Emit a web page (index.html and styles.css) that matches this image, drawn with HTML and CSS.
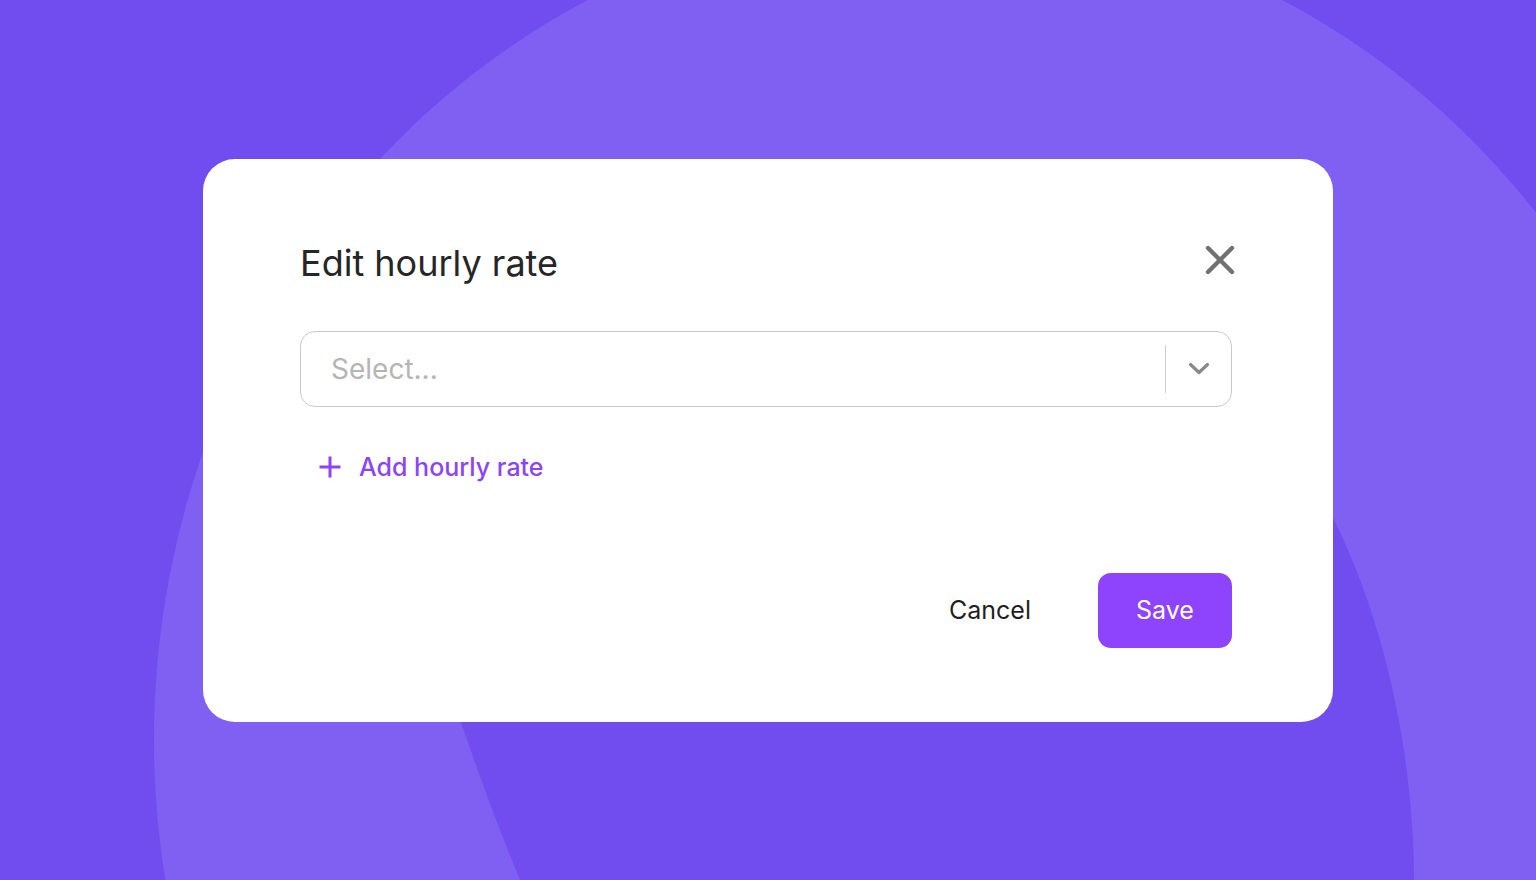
FILE: index.html
```html
<!DOCTYPE html>
<html lang="en">
<head>
    <meta charset="UTF-8">
    <meta name="viewport" content="width=device-width, initial-scale=1.0">
    <title>Edit hourly rate</title>
    <link rel="stylesheet" href="styles.css">
</head>
<body>
    <!-- decorative ring behind the dialog -->
    <svg class="backdrop" viewBox="0 0 1536 880" preserveAspectRatio="none" aria-hidden="true">
        <ellipse cx="935" cy="740" rx="781" ry="826" fill="#7f60f2"/>
        <path d="M1300 460 C1385 590 1414 760 1414 880 L520 880 C495 820 470 750 450 690 Z" fill="#714df0"/>
    </svg>

    <div class="modal">
        <div class="modal-header">
            <h1>Edit hourly rate</h1>
            <button class="close-btn" aria-label="Close">
                <svg width="34" height="34" viewBox="0 0 34 34">
                    <path d="M5 5 L29 29 M29 5 L5 29" stroke="#717171" stroke-width="4.4" stroke-linecap="round" fill="none"/>
                </svg>
            </button>
        </div>

        <div class="select">
            <span class="select-placeholder">Select...</span>
            <span class="select-sep"></span>
            <span class="select-indicator">
                <svg width="22" height="14" viewBox="0 0 22 14">
                    <path d="M2.5 2.5 L11 10.5 L19.5 2.5" stroke="#888" stroke-width="3.2" stroke-linecap="round" stroke-linejoin="round" fill="none"/>
                </svg>
            </span>
        </div>

        <button class="add-link">
            <svg width="24" height="24" viewBox="0 0 24 24">
                <path d="M12 1.5 V22.5 M1.5 12 H22.5" stroke="#8b45f9" stroke-width="3" fill="none"/>
            </svg>
            <span>Add hourly rate</span>
        </button>

        <div class="modal-actions">
            <button class="btn-cancel">Cancel</button>
            <button class="btn-save">Save</button>
        </div>
    </div>
</body>
</html>
```

FILE: styles.css
```css
body {
    font-family: 'Inter', 'Noto Sans', sans-serif;
    margin: 0;
    padding: 0;
    height: 100vh;
    display: flex;
    justify-content: center;
    align-items: center;
    background-color: #714df0;
    overflow: hidden;
}
.backdrop {
    position: fixed;
    top: 0;
    left: 0;
    width: 100%;
    height: 100%;
    z-index: 0;
}
.modal {
    position: relative;
    z-index: 1;
    width: 1130px;
    height: 563px;
    box-sizing: border-box;
    padding: 82px 101px 0 97px;
    background: #fff;
    border-radius: 32px;
    display: flex;
    flex-direction: column;
}
.modal-header {
    display: flex;
    justify-content: space-between;
    align-items: flex-start;
}
.modal-header h1 {
    margin: 0;
    font-size: 36px;
    line-height: 44px;
    font-weight: 400;
    color: #262626;
}
.close-btn {
    background: none;
    border: none;
    padding: 0;
    margin: 2px -5px 0 0;
    width: 34px;
    height: 34px;
    cursor: pointer;
}
.select {
    margin-top: 46px;
    height: 76px;
    box-sizing: border-box;
    border: 1px solid #c9c9c9;
    border-radius: 15px;
    display: flex;
    align-items: center;
}
.select-placeholder {
    flex: 1;
    padding-left: 30px;
    font-size: 28px;
    color: #b5b5b5;
}
.select-sep {
    width: 1px;
    height: 48px;
    background: #cfcfcf;
}
.select-indicator {
    width: 65px;
    display: flex;
    justify-content: center;
    align-items: center;
}
.add-link {
    margin-top: 45px;
    margin-left: 18px;
    align-self: flex-start;
    display: flex;
    align-items: center;
    gap: 17px;
    background: none;
    border: none;
    padding: 0;
    font-family: inherit;
    font-size: 25px;
    font-weight: 500;
    line-height: 30px;
    color: #8b45f9;
    cursor: pointer;
}
.modal-actions {
    margin-top: 91px;
    display: flex;
    justify-content: flex-end;
    align-items: center;
    gap: 43px;
}
.btn-cancel {
    background: none;
    border: none;
    padding: 0 24px;
    font-family: inherit;
    font-size: 25px;
    color: #1f1f1f;
    cursor: pointer;
}
.btn-save {
    width: 134px;
    height: 75px;
    border: none;
    border-radius: 13px;
    background-color: #8e44fd;
    color: #fff;
    font-family: inherit;
    font-size: 25px;
    cursor: pointer;
}
```
